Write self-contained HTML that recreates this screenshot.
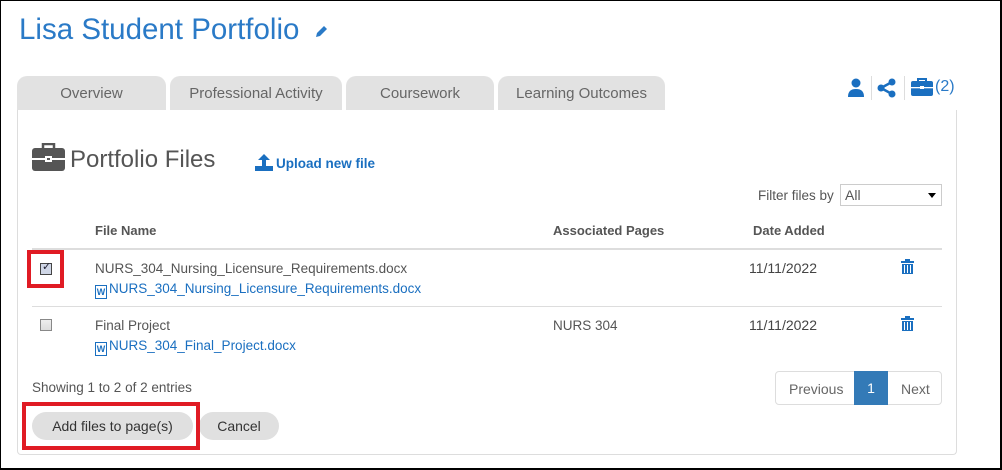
<!DOCTYPE html>
<html><head><style>
*{box-sizing:border-box;margin:0;padding:0}
body{width:1002px;height:470px;position:relative;background:#fff;font-family:"Liberation Sans",sans-serif;overflow:hidden}
.frame{position:absolute;left:0;top:0;width:1002px;height:470px;border:2px solid #000;border-left-width:1px;border-top-width:1px}
.a{position:absolute;white-space:nowrap}
.tab{position:absolute;top:76px;height:34px;background:#e2e2e2;border-radius:10px 10px 0 0;color:#666;font-size:15px;text-align:center;line-height:36px}
.panel{position:absolute;left:17px;top:110px;width:940px;height:345px;border:1px solid #ddd;border-top:none;border-radius:0 0 4px 4px}
.hdr{font-weight:bold;font-size:13px;color:#555}
.t{font-size:13.5px;color:#555}
.lnk{font-size:13.5px;color:#1a6fc0}
.line{position:absolute;left:32px;width:910px;background:#ddd}
.cb{position:absolute;width:12px;height:12px;border:1px solid #888;background:linear-gradient(#eee,#ddd)}
.red{position:absolute;border:4px solid #e01b24}
.btn{position:absolute;height:28px;border-radius:14px;background:#e0e0e0;font-size:14px;color:#333;text-align:center;line-height:28px}
.w{display:inline-block;width:12px;height:14px;border:1px solid #1a6fc0;font-size:9px;line-height:12px;text-align:center;vertical-align:-2px;margin-right:2px;font-weight:bold}
</style></head><body>
<div class="a" style="left:19px;top:13px;font-size:29.5px;color:#2a7ac7">Lisa Student Portfolio</div>
<svg class="a" style="left:315px;top:24px" width="14" height="14" viewBox="0 0 14 14"><path d="M1 13l1-4 7-7 3 3-7 7z" fill="#2a7ac7"/></svg>
<div class="tab" style="left:17px;width:149px">Overview</div>
<div class="tab" style="left:170px;width:172px">Professional Activity</div>
<div class="tab" style="left:346px;width:148px">Coursework</div>
<div class="tab" style="left:498px;width:167px">Learning Outcomes</div>
<svg class="a" style="left:847px;top:78px" width="18" height="20" viewBox="0 0 18 20"><circle cx="9" cy="5" r="4.5" fill="#1a6fc0"/><path d="M1 19c0-6 3-8 8-8s8 2 8 8z" fill="#1a6fc0"/></svg>
<div class="a" style="left:871px;top:76px;width:1px;height:24px;background:#ddd"></div>
<svg class="a" style="left:877px;top:78px" width="20" height="20" viewBox="0 0 20 20"><circle cx="4" cy="10" r="3.5" fill="#1a6fc0"/><circle cx="15" cy="4" r="3.5" fill="#1a6fc0"/><circle cx="15" cy="16" r="3.5" fill="#1a6fc0"/><path d="M4 10L15 4M4 10L15 16" stroke="#1a6fc0" stroke-width="2.5"/></svg>
<div class="a" style="left:904px;top:76px;width:1px;height:24px;background:#ddd"></div>
<svg class="a" style="left:911px;top:78px" width="22" height="18" viewBox="0 0 22 18"><path d="M7 3V1h8v2" stroke="#1a6fc0" stroke-width="2" fill="none"/><rect x="0" y="3" width="22" height="15" rx="2" fill="#1a6fc0"/><rect x="0" y="9" width="22" height="1.3" fill="#fff"/><rect x="9" y="8" width="4" height="3" fill="#fff"/></svg>
<div class="a" style="left:935px;top:78px;font-size:16px;color:#2a7ac7">(2)</div>
<div class="panel"></div>
<svg class="a" style="left:32px;top:143px" width="33" height="28" viewBox="0 0 33 28"><path d="M11 5V1h11v4" stroke="#555" stroke-width="2.5" fill="none"/><rect x="0" y="5" width="33" height="23" rx="3" fill="#555"/><rect x="0" y="15" width="33" height="2" fill="#fff"/><rect x="13" y="13" width="7" height="6" fill="#fff"/><rect x="15" y="15" width="3" height="2" fill="#555"/></svg>
<div class="a" style="left:70px;top:146px;font-size:24px;color:#555">Portfolio Files</div>
<svg class="a" style="left:255px;top:154px" width="18" height="17" viewBox="0 0 18 17"><path d="M9 0l6 6h-4v6H7V6H3z" fill="#1a6fc0"/><rect x="0" y="12" width="18" height="5" fill="#1a6fc0"/></svg>
<div class="a" style="left:276px;top:156px;font-size:13.5px;font-weight:bold;color:#1a6fc0">Upload new file</div>
<div class="a t" style="left:758px;top:188px">Filter files by</div>
<div class="a" style="left:840px;top:184px;width:102px;height:22px;border:1px solid #ccc;font-size:14px;color:#555;padding:2px 4px">All<span style="position:absolute;right:5px;top:8px;border:4px solid transparent;border-top:5px solid #000;border-bottom:0"></span></div>
<div class="a hdr" style="left:95px;top:223px">File Name</div>
<div class="a hdr" style="left:553px;top:223px">Associated Pages</div>
<div class="a hdr" style="left:753px;top:223px">Date Added</div>
<div class="line" style="top:248px;height:2px"></div>
<div class="cb" style="left:40px;top:263px;border-color:#444;background:#cfd6e6"><span style="position:absolute;left:1px;top:-4px;font-size:11px;color:#223">✓</span></div>
<div class="red" style="left:27px;top:250px;width:37px;height:38px"></div>
<div class="a t" style="left:95px;top:261px">NURS_304_Nursing_Licensure_Requirements.docx</div>
<div class="a lnk" style="left:95px;top:281px"><span class="w">W</span>NURS_304_Nursing_Licensure_Requirements.docx</div>
<div class="a" style="left:749px;top:260px;font-size:14px;color:#444">11/11/2022</div>
<svg class="a" style="left:901px;top:259px" width="13" height="15" viewBox="0 0 13 15"><rect x="0" y="2" width="13" height="2" fill="#1a6fc0"/><rect x="4" y="0" width="5" height="2" fill="#1a6fc0"/><path d="M1 5h11v10H1z" fill="#1a6fc0"/><path d="M3.5 6v8M6.5 6v8M9.5 6v8" stroke="#fff"/></svg>
<div class="line" style="top:306px;height:1px"></div>
<div class="cb" style="left:40px;top:319px"></div>
<div class="a t" style="left:95px;top:318px">Final Project</div>
<div class="a lnk" style="left:95px;top:338px"><span class="w">W</span>NURS_304_Final_Project.docx</div>
<div class="a t" style="left:553px;top:318px">NURS 304</div>
<div class="a" style="left:749px;top:317px;font-size:14px;color:#444">11/11/2022</div>
<svg class="a" style="left:901px;top:316px" width="13" height="15" viewBox="0 0 13 15"><rect x="0" y="2" width="13" height="2" fill="#1a6fc0"/><rect x="4" y="0" width="5" height="2" fill="#1a6fc0"/><path d="M1 5h11v10H1z" fill="#1a6fc0"/><path d="M3.5 6v8M6.5 6v8M9.5 6v8" stroke="#fff"/></svg>
<div class="a t" style="left:32px;top:380px">Showing 1 to 2 of 2 entries</div>
<div class="a" style="left:775px;top:371px;width:167px;height:34px;border:1px solid #ddd;border-radius:4px;font-size:14px;color:#666">
<span class="a" style="left:13px;top:9px">Previous</span>
<span class="a" style="left:78px;top:-1px;width:34px;height:34px;background:#337ab7;color:#fff;text-align:center;line-height:34px">1</span>
<span class="a" style="left:125px;top:9px">Next</span></div>
<div class="btn" style="left:32px;top:412px;width:161px">Add files to page(s)</div>
<div class="btn" style="left:199px;top:412px;width:80px">Cancel</div>
<div class="red" style="left:22px;top:402px;width:178px;height:48px"></div>
<div class="frame"></div>
</body></html>
